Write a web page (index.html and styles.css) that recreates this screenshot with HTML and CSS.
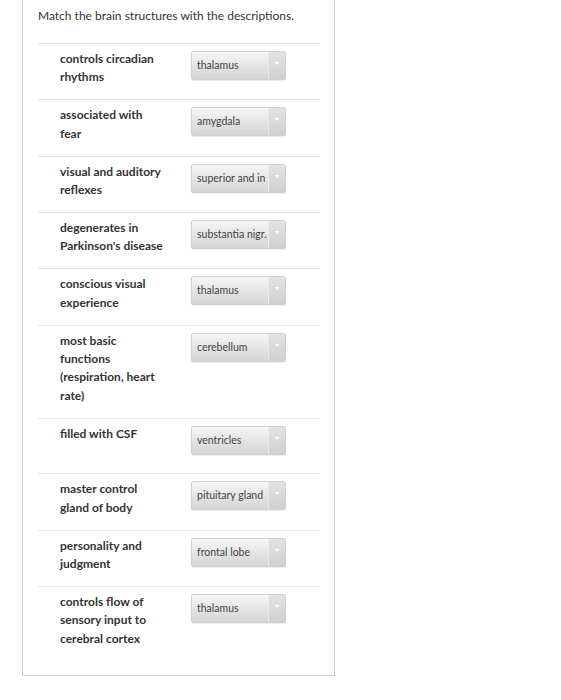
FILE: index.html
```html
<!DOCTYPE html>
<html>
<head>
<meta charset="utf-8">
<link rel="stylesheet" href="styles.css">
</head>
<body>
<div class="card">
  <p class="prompt">Match the brain structures with the descriptions.</p>
  <div class="rows">
    <div class="row"><div class="desc">controls circadian rhythms</div><div class="sel"><span class="val">thalamus</span><span class="arrow"></span></div></div>
    <div class="row"><div class="desc">associated with fear</div><div class="sel"><span class="val">amygdala</span><span class="arrow"></span></div></div>
    <div class="row"><div class="desc">visual and auditory reflexes</div><div class="sel"><span class="val">superior and in</span><span class="arrow"></span></div></div>
    <div class="row"><div class="desc">degenerates in Parkinson's disease</div><div class="sel"><span class="val">substantia nigr.</span><span class="arrow"></span></div></div>
    <div class="row"><div class="desc">conscious visual experience</div><div class="sel"><span class="val">thalamus</span><span class="arrow"></span></div></div>
    <div class="row"><div class="desc">most basic functions (respiration, heart rate)</div><div class="sel"><span class="val">cerebellum</span><span class="arrow"></span></div></div>
    <div class="row"><div class="desc">filled with CSF</div><div class="sel"><span class="val">ventricles</span><span class="arrow"></span></div></div>
    <div class="row"><div class="desc">master control gland of body</div><div class="sel"><span class="val">pituitary gland</span><span class="arrow"></span></div></div>
    <div class="row"><div class="desc">personality and judgment</div><div class="sel"><span class="val">frontal lobe</span><span class="arrow"></span></div></div>
    <div class="row"><div class="desc">controls flow of sensory input to cerebral cortex</div><div class="sel"><span class="val">thalamus</span><span class="arrow"></span></div></div>
  </div>
</div>
</body>
</html>
```
FILE: styles.css
```css
html, body {
  margin: 0;
  padding: 0;
  background: #fff;
}
body {
  font-family: Lato, "Open Sans", "Liberation Sans", sans-serif;
  color: #333;
}
.card {
  box-sizing: border-box;
  margin-left: 22px;
  width: 313px;
  border: 1px solid #cfcfcf;
  border-top: none;
  padding: 6px 14px 14px 15px;
}
.prompt {
  margin: 0 0 17px 0;
  font-size: 12px;
  line-height: 20px;
  color: #333;
}
.rows {
  width: 282px;
}
.row {
  display: flex;
  align-items: flex-start;
  border-top: 1px solid #e6e6e6;
  padding: 6px 0 12.5px 22px;
}
.desc {
  width: 105px;
  margin-right: 26px;
  font-size: 12px;
  font-weight: 700;
  line-height: 18.4px;
  color: #333;
}
.sel {
  display: flex;
  width: 93px;
  height: 27px;
  margin-top: 1px;
  margin-bottom: 6px;
  border: 1px solid #d0d0d0;
  border-radius: 2px;
  background: linear-gradient(#f6f6f6, #d4d4d4);
  box-shadow: 0 1px 1px rgba(0,0,0,0.08);
  overflow: hidden;
}
.val {
  flex: 1;
  padding-left: 5px;
  font-size: 10.5px;
  line-height: 27px;
  color: #444;
  white-space: nowrap;
  overflow: hidden;
}
.arrow {
  width: 16px;
  position: relative;
  border-left: 1px solid #ebebeb;
  background: linear-gradient(#e2e2e2, #d0d0d0);
}
.arrow::after {
  content: "";
  position: absolute;
  left: 6px;
  top: 10px;
  border-left: 2px solid transparent;
  border-right: 2px solid transparent;
  border-top: 3px solid #fff;
}
```
